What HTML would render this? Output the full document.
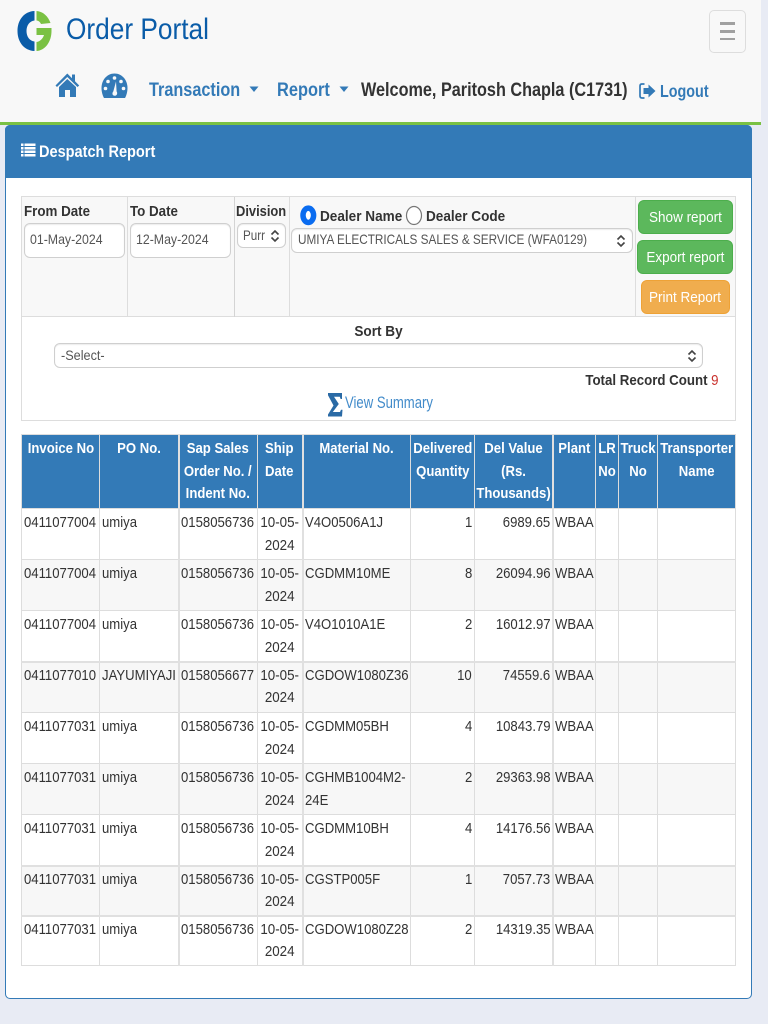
<!DOCTYPE html>
<html lang="en"><head><meta charset="utf-8"><title>Despatch Report</title>
<style>
html,body{margin:0;padding:0}
body{width:768px;height:1024px;background:#e8ebf4;position:relative;overflow:hidden;font-family:"Liberation Sans",Arial,sans-serif;color:#333;font-size:14.5px}
.a{position:absolute;white-space:nowrap}
.l{transform:scaleX(.905);transform-origin:left center}
.c{transform:scaleX(.905);transform-origin:center center;text-align:center}
.r{transform:scaleX(.885);transform-origin:right center;text-align:right}
.b{font-weight:bold}
.box{position:absolute;background:#fff;border:1px solid #cfcfcf;border-radius:6px;box-shadow:inset 0 1px 1px rgba(0,0,0,.08);box-sizing:border-box}
.btn{position:absolute;border-radius:6px;box-sizing:border-box;color:#fff;display:flex;align-items:center;justify-content:center;font-size:15px}
.btn span{display:block;position:relative;top:0;transform:scaleX(.9);white-space:nowrap}
table{position:absolute;left:21px;top:434px;width:715px;border-collapse:collapse;table-layout:fixed;font-size:15px}
th,td{border:1px solid #ddd;padding:0 2px;vertical-align:top;line-height:22.7px;box-sizing:border-box}
th{background:#337ab7;color:#fff;text-align:center;padding-top:3px;height:74px;font-size:15px}
td{padding-top:3px;height:51px;text-align:left}
td.n{text-align:right}
td.m{text-align:center}
tr.e td{background:#f7f7f7}
tr.h td{height:50px}
tr.t td{border-bottom:2px solid #e0e0e0}
tr.t + tr td{padding-top:2px}
th:nth-child(2),td:nth-child(2),th:nth-child(4),td:nth-child(4),th:nth-child(7),td:nth-child(7){border-right:2px solid #e0e0e0}
td:nth-child(3),td:nth-child(5),td:nth-child(8){padding-left:1px}
td:nth-child(7){padding-right:1px}
th span,td span{display:inline-block;white-space:nowrap;transform:scaleX(.875)}
th span,td.m span{transform-origin:center;margin:0 -14px}
td.m span{transform:scaleX(.89)}
td span{transform-origin:left}
td.n span{transform-origin:right}
</style></head><body>

<!-- navbar -->
<div class="a" style="left:0;top:0;width:761px;height:125px;background:#f8f8f8;border-bottom:3px solid #7ac143;box-sizing:border-box"></div>
<svg class="a" style="left:16px;top:10px" width="38" height="42" viewBox="0 0 38 42">
<path d="M18.500 1C8 1.500 1.500 10 1.500 21S8 40.500 18.500 41V31.500C13.500 31 10.500 26.500 10.500 21S13.500 11 18.500 10.500Z" fill="#0a5ca8"/>
<path d="M20.500 1C27 1.500 32 6 34.500 13L25 14C24 12 22.500 10.500 20.500 10.500Z" fill="#7ac143"/>
<path d="M20.500 18H35.500V21C35.500 32 29 40.500 20.500 41V32C24 31.500 27 28.500 28 25H20.500Z" fill="#7ac143"/>
</svg>
<div class="a" style="left:66px;top:12px;font-size:30px;line-height:36px;color:#0a5ca8;transform:scaleX(.875);transform-origin:left center">Order Portal</div>

<svg class="a" style="left:55px;top:72px" width="25" height="26" viewBox="0 0 25 26" fill="#337ab7">
<path d="M12.300 1.500L0.500 13.500L2 15L12.300 5L22.500 15L24.200 13.500L20 9.300V2.500H17V6.300Z"/>
<path d="M12.300 7L4 15V25H10V18H15V25H21V15Z"/>
</svg>
<svg class="a" style="left:101px;top:73px" width="27" height="26" viewBox="0 0 27 26">
<path d="M13.500 0.500C6 0.500 0.500 7 0.500 15C0.500 18.500 1.500 22.500 3 25H24C25.500 22.500 26.500 18.500 26.500 15C26.500 7 21 0.500 13.500 0.500Z" fill="#337ab7"/>
<g fill="#f8f8f8"><circle cx="13.500" cy="5" r="1.800"/><circle cx="7" cy="8.500" r="1.800"/><circle cx="20" cy="8.500" r="1.800"/><circle cx="4.500" cy="15.500" r="1.800"/><circle cx="22.500" cy="15.500" r="1.800"/>
<path d="M15 8.500L15.600 18.500C16.500 19.500 16.600 22.500 13.800 22.800C11 22.800 11 19.800 12.300 18.500Z"/></g>
</svg>

<div class="a b l" style="left:149px;top:78px;font-size:19.500px;line-height:24px;color:#337ab7;transform:scaleX(.833)">Transaction</div>
<svg class="a" style="left:248px;top:85px" width="12" height="8"><path d="M1.500 1.500H10.500L6 7Z" fill="#337ab7"/></svg>
<div class="a b l" style="left:277px;top:78px;font-size:19.500px;line-height:24px;color:#337ab7;transform:scaleX(.84)">Report</div>
<svg class="a" style="left:338px;top:85px" width="12" height="8"><path d="M1.500 1.500H10.500L6 7Z" fill="#337ab7"/></svg>
<div class="a b l" style="left:361px;top:78px;font-size:19.500px;line-height:24px;color:#333;transform:scaleX(.832)">Welcome, Paritosh Chapla (C1731)</div>
<svg class="a" style="left:639px;top:82px" width="17" height="18" viewBox="0 0 17 18">
<path d="M5.500 2H3C1.800 2 1 2.800 1 4V14C1 15.200 1.800 16 3 16H5.500" fill="none" stroke="#337ab7" stroke-width="1.700"/>
<path d="M9.500 2.500L16.500 9L9.500 15.500V12H4.500V6H9.500Z" fill="#337ab7"/>
</svg>
<div class="a b l" style="left:660px;top:78.500px;font-size:17.500px;line-height:24px;color:#337ab7;transform:scaleX(.82)">Logout</div>

<div class="a" style="left:709px;top:10px;width:37px;height:43px;border:1px solid #ddd;border-radius:5px;box-sizing:border-box"></div>
<div class="a" style="left:720px;top:22px;width:15px;height:2.500px;background:#a0a0a0"></div>
<div class="a" style="left:720px;top:30px;width:15px;height:2.500px;background:#a0a0a0"></div>
<div class="a" style="left:720px;top:37.500px;width:15px;height:2.500px;background:#a0a0a0"></div>

<!-- panel -->
<div class="a" style="left:5px;top:125px;width:747px;height:874px;background:#fff;border:1px solid #337ab7;border-radius:5px;box-sizing:border-box"></div>
<div class="a" style="left:5px;top:125px;width:747px;height:53px;background:#337ab7;border-radius:5px 5px 0 0"></div>
<svg class="a" style="left:21px;top:143px" width="15" height="14" fill="#fff">
<rect x="0" y="0.500" width="2.500" height="2.500"/><rect x="0" y="4" width="2.500" height="2.500"/><rect x="0" y="7.500" width="2.500" height="2.500"/><rect x="0" y="11" width="2.500" height="2.500"/>
<rect x="3.500" y="0.500" width="11" height="2.500"/><rect x="3.500" y="4" width="11" height="2.500"/><rect x="3.500" y="7.500" width="11" height="2.500"/><rect x="3.500" y="11" width="11" height="2.500"/>
</svg>
<div class="a b l" style="left:39px;top:142px;font-size:17px;line-height:20px;color:#fff;transform:scaleX(.855)">Despatch Report</div>

<!-- form frame -->
<div class="a" style="left:21px;top:196px;width:715px;height:225px;background:#fff;border:1px solid #ddd;box-sizing:border-box"></div>
<div class="a" style="left:22px;top:197px;width:713px;height:120px;background:#f8f8f8;border-bottom:1px solid #ddd;box-sizing:border-box"></div>
<div class="a" style="left:127px;top:197px;width:1px;height:120px;background:#ddd"></div>
<div class="a" style="left:234px;top:197px;width:1px;height:120px;background:#d4d4d4"></div>
<div class="a" style="left:289px;top:197px;width:1px;height:120px;background:#ddd"></div>
<div class="a" style="left:635px;top:197px;width:1px;height:120px;background:#ddd"></div>

<div class="a b l" style="left:24px;top:202px;line-height:20px;font-size:15px;transform:scaleX(.89)">From Date</div>
<div class="a b l" style="left:130px;top:202px;line-height:20px;font-size:15px;transform:scaleX(.89)">To Date</div>
<div class="a b l" style="left:236px;top:202px;line-height:20px;font-size:15px;transform:scaleX(.86)">Division</div>

<div class="box" style="left:24px;top:223px;width:101px;height:35px"></div>
<div class="a l" style="left:30px;top:229px;line-height:20px;font-size:14px;color:#555;transform:scaleX(.88)">01-May-2024</div>
<div class="box" style="left:130px;top:223px;width:101px;height:35px"></div>
<div class="a l" style="left:136px;top:229px;line-height:20px;font-size:14px;color:#555;transform:scaleX(.88)">12-May-2024</div>

<div class="box" style="left:237px;top:223px;width:49px;height:25px"></div>
<div class="a" style="left:243px;top:225px;line-height:20px;font-size:14px;color:#555;width:22px;overflow:hidden"><span style="display:inline-block;transform:scaleX(.83);transform-origin:left">Purr</span></div>
<svg class="a" style="left:270px;top:229px" width="10" height="14" fill="none" stroke="#444" stroke-width="1.600"><path d="M1.500 5.500L5 2L8.500 5.500M1.500 8.500L5 12L8.500 8.500"/></svg>

<svg class="a" style="left:299px;top:205px" width="19" height="21"><ellipse cx="9.300" cy="10.300" rx="5.300" ry="7.200" fill="#fff" stroke="#0a6cf0" stroke-width="5.500"/></svg>
<div class="a b l" style="left:320px;top:207px;line-height:20px;font-size:15px">Dealer Name</div>
<svg class="a" style="left:405px;top:205px" width="19" height="21"><ellipse cx="9" cy="10.500" rx="7.500" ry="9" fill="#fff" stroke="#777" stroke-width="1.200"/></svg>
<div class="a b l" style="left:426px;top:207px;line-height:20px;font-size:15px">Dealer Code</div>

<div class="box" style="left:291px;top:228px;width:342px;height:25px"></div>
<div class="a l" style="left:298px;top:229px;line-height:20px;font-size:14px;color:#555;transform:scaleX(.84)">UMIYA ELECTRICALS SALES &amp; SERVICE (WFA0129)</div>
<svg class="a" style="left:616px;top:234px" width="10" height="14" fill="none" stroke="#444" stroke-width="1.600"><path d="M1.500 5.500L5 2L8.500 5.500M1.500 8.500L5 12L8.500 8.500"/></svg>

<div class="btn" style="left:638px;top:200px;width:95px;height:34px;background:#5cb85c;border:1px solid #4cae4c"><span>Show report</span></div>
<div class="btn" style="left:637px;top:240px;width:96px;height:34px;background:#5cb85c;border:1px solid #4cae4c"><span>Export report</span></div>
<div class="btn" style="left:641px;top:280px;width:89px;height:34px;background:#f0ad4e;border:1px solid #eea236"><span>Print Report</span></div>

<div class="a b c" style="left:22px;top:322px;width:713px;line-height:20px;font-size:15px">Sort By</div>
<div class="box" style="left:54px;top:343px;width:649px;height:25px"></div>
<div class="a l" style="left:61px;top:344.500px;line-height:20px;font-size:14px;color:#555">-Select-</div>
<svg class="a" style="left:687px;top:349px" width="10" height="14" fill="none" stroke="#444" stroke-width="1.600"><path d="M1.500 5.500L5 2L8.500 5.500M1.500 8.500L5 12L8.500 8.500"/></svg>
<div class="a r" style="right:49.500px;top:371px;line-height:20px;font-size:15px"><b>Total Record Count</b> <span style="color:#c9302c">9</span></div>
<svg class="a" style="left:327px;top:392px" width="16" height="25"><path d="M1 1H15V7H13.600L12.800 4.800H7L11.800 12L5.800 20H13L14 17.800H15.500L15 24.500H1V22.500L6.500 13.500L1 3.200Z" fill="#2a6aa5"/></svg>
<div class="a l" style="left:345px;top:393px;line-height:20px;font-size:16.500px;color:#428bca;transform:scaleX(.795)">View Summary</div>

<!-- data table -->
<table>
<colgroup><col style="width:78px"><col style="width:79px"><col style="width:79px"><col style="width:45px"><col style="width:108px"><col style="width:64px"><col style="width:78px"><col style="width:43px"><col style="width:23px"><col style="width:39px"><col style="width:78px"></colgroup>
<thead><tr>
<th><span>Invoice No</span></th><th><span>PO No.</span></th><th><span>Sap Sales<br>Order No. /<br>Indent No.</span></th><th><span>Ship<br>Date</span></th><th><span>Material No.</span></th><th><span>Delivered<br>Quantity</span></th><th><span>Del Value<br>(Rs.<br>Thousands)</span></th><th><span>Plant</span></th><th><span>LR<br>No</span></th><th><span>Truck<br>No</span></th><th><span>Transporter<br>Name</span></th>
</tr></thead>
<tbody>
<tr><td><span>0411077004</span></td><td><span>umiya</span></td><td><span>0158056736</span></td><td class="m"><span>10-05-<br>2024</span></td><td><span>V4O0506A1J</span></td><td class="n"><span>1</span></td><td class="n"><span>6989.65</span></td><td><span>WBAA</span></td><td></td><td></td><td></td></tr>
<tr class="e"><td><span>0411077004</span></td><td><span>umiya</span></td><td><span>0158056736</span></td><td class="m"><span>10-05-<br>2024</span></td><td><span>CGDMM10ME</span></td><td class="n"><span>8</span></td><td class="n"><span>26094.96</span></td><td><span>WBAA</span></td><td></td><td></td><td></td></tr>
<tr class="t"><td><span>0411077004</span></td><td><span>umiya</span></td><td><span>0158056736</span></td><td class="m"><span>10-05-<br>2024</span></td><td><span>V4O1010A1E</span></td><td class="n"><span>2</span></td><td class="n"><span>16012.97</span></td><td><span>WBAA</span></td><td></td><td></td><td></td></tr>
<tr class="e"><td><span>0411077010</span></td><td><span>JAYUMIYAJI</span></td><td><span>0158056677</span></td><td class="m"><span>10-05-<br>2024</span></td><td><span>CGDOW1080Z36</span></td><td class="n"><span>10</span></td><td class="n"><span>74559.6</span></td><td><span>WBAA</span></td><td></td><td></td><td></td></tr>
<tr><td><span>0411077031</span></td><td><span>umiya</span></td><td><span>0158056736</span></td><td class="m"><span>10-05-<br>2024</span></td><td><span>CGDMM05BH</span></td><td class="n"><span>4</span></td><td class="n"><span>10843.79</span></td><td><span>WBAA</span></td><td></td><td></td><td></td></tr>
<tr class="e"><td><span>0411077031</span></td><td><span>umiya</span></td><td><span>0158056736</span></td><td class="m"><span>10-05-<br>2024</span></td><td><span>CGHMB1004M2-<br>24E</span></td><td class="n"><span>2</span></td><td class="n"><span>29363.98</span></td><td><span>WBAA</span></td><td></td><td></td><td></td></tr>
<tr class="t"><td><span>0411077031</span></td><td><span>umiya</span></td><td><span>0158056736</span></td><td class="m"><span>10-05-<br>2024</span></td><td><span>CGDMM10BH</span></td><td class="n"><span>4</span></td><td class="n"><span>14176.56</span></td><td><span>WBAA</span></td><td></td><td></td><td></td></tr>
<tr class="e h t"><td><span>0411077031</span></td><td><span>umiya</span></td><td><span>0158056736</span></td><td class="m"><span>10-05-<br>2024</span></td><td><span>CGSTP005F</span></td><td class="n"><span>1</span></td><td class="n"><span>7057.73</span></td><td><span>WBAA</span></td><td></td><td></td><td></td></tr>
<tr class="h"><td><span>0411077031</span></td><td><span>umiya</span></td><td><span>0158056736</span></td><td class="m"><span>10-05-<br>2024</span></td><td><span>CGDOW1080Z28</span></td><td class="n"><span>2</span></td><td class="n"><span>14319.35</span></td><td><span>WBAA</span></td><td></td><td></td><td></td></tr>
</tbody>
</table>
</body></html>
